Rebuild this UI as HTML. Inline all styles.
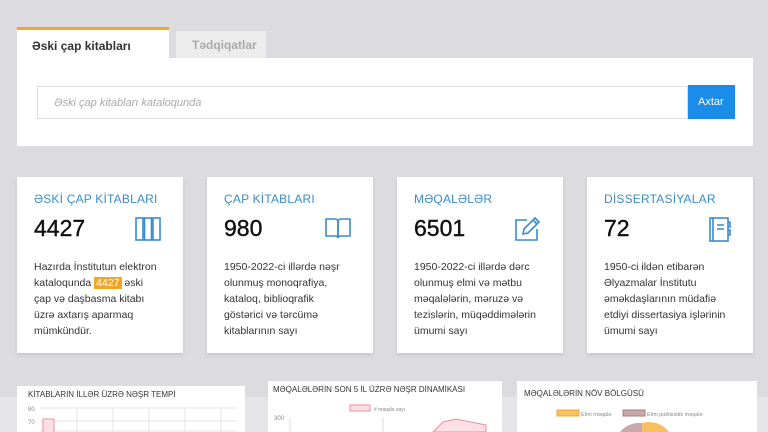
<!DOCTYPE html><html><head><meta charset="utf-8"><style>
*{box-sizing:border-box;margin:0;padding:0}
html,body{width:768px;height:432px;overflow:hidden}
body{background:#dcdce0;font-family:"Liberation Sans",sans-serif;position:relative}
.band{position:absolute;left:0;top:397px;width:768px;height:35px;background:#e6e6ea}
.abs{position:absolute}
.tab1{left:17px;top:27px;width:152px;height:32px;background:#fff;border-top:3px solid #f0a830;font-size:12px;font-weight:bold;color:#333;padding:9px 0 0 15px}
.tab2{left:176px;top:31px;width:90px;height:27px;background:#ececec;font-size:12px;font-weight:bold;color:#aaa;padding:7px 0 0 16px}
.panel{left:17px;top:58px;width:736px;height:88px;background:#fff}
.inp{left:37px;top:86px;width:651px;height:33px;border:1px solid #ddd;font-size:11px;font-style:italic;color:#aaa;padding:10px 0 0 16px}
.btn{left:688px;top:85px;width:47px;height:34px;background:#1a8cea;color:#fff;font-size:11px;padding:11px 0 0 10px}
.card{top:177px;width:166px;height:176px;background:#fff;box-shadow:0 2px 4px rgba(0,0,0,.1);padding:15px 0 0 17px}
.t{font-size:12px;color:#3a8ccc;letter-spacing:.2px}
.n{font-size:23px;color:#111;margin-top:9px;height:44px;-webkit-text-stroke:.4px #111}
.d{font-size:10.5px;color:#333;line-height:16px}
.ic{position:absolute;right:22px;top:40px}
.hl{background:#f5a623;color:#fff;padding:0 2px}
.ch{background:#fff;height:60px}
.ct{font-size:8px;color:#333;position:absolute}
</style></head><body>
<div class="band"></div>
<div class="abs tab1">Əski çap kitabları</div>
<div class="abs tab2">Tədqiqatlar</div>
<div class="abs panel"></div>
<div class="abs inp">Əski çap kitabları kataloqunda</div>
<div class="abs btn">Axtar</div>

<div class="abs card" style="left:17px"><div class="t">ƏSKİ ÇAP KİTABLARI</div><div class="n">4427</div>
<svg class="ic" width="26" height="24" viewBox="0 0 26 24" fill="none" stroke="#3a8ccc" stroke-width="1.6"><rect x="1" y="1" width="7" height="22"/><rect x="9.5" y="1" width="7" height="22"/><rect x="18" y="1" width="7" height="22"/></svg>
<div class="d">Hazırda İnstitutun elektron<br>kataloqunda <span class="hl">4427</span> əski<br>çap və daşbasma kitabı<br>üzrə axtarış aparmaq<br>mümkündür.</div></div>

<div class="abs card" style="left:207px"><div class="t">ÇAP KİTABLARI</div><div class="n">980</div>
<svg class="ic" width="26" height="22" viewBox="0 0 26 22" fill="none" stroke="#3a8ccc" stroke-width="1.6"><path d="M1 2h9c2 0 3 1 3 3v16c0-1.5-1-2-3-2H1z"/><path d="M25 2h-9c-2 0-3 1-3 3v16c0-1.5 1-2 3-2h9z"/></svg>
<div class="d">1950-2022-ci illərdə nəşr<br>olunmuş monoqrafiya,<br>kataloq, biblioqrafik<br>göstərici və tərcümə<br>kitablarının sayı</div></div>

<div class="abs card" style="left:397px"><div class="t">MƏQALƏLƏR</div><div class="n">6501</div>
<svg class="ic" width="26" height="24" viewBox="0 0 26 24" fill="none" stroke="#3a8ccc" stroke-width="1.6"><path d="M12 3H1v20h21V12"/><path d="M20 1l4 4-11 11-5 1 1-5z"/><path d="M18 3l4 4"/></svg>
<div class="d">1950-2022-ci illərdə dərc<br>olunmuş elmi və mətbu<br>məqalələrin, məruzə və<br>tezislərin, müqəddimələrin<br>ümumi sayı</div></div>

<div class="abs card" style="left:587px"><div class="t">DİSSERTASİYALAR</div><div class="n">72</div>
<svg class="ic" width="22" height="25" viewBox="0 0 22 25" fill="none" stroke="#3a8ccc" stroke-width="1.6"><rect x="1" y="1" width="18" height="23"/><path d="M4 1v23M8 8h7M8 12h7M19 5h2v5h-2M19 13h2v5h-2"/></svg>
<div class="d">1950-ci ildən etibarən<br>Əlyazmalar İnstitutu<br>əməkdaşlarının müdafiə<br>etdiyi dissertasiya işlərinin<br>ümumi sayı</div></div>

<div class="abs ch" style="left:17px;top:386px;width:228px"></div>
<div class="ct" style="left:28px;top:390px">KİTABLARIN İLLƏR ÜZRƏ NƏŞR TEMPİ</div>
<svg class="abs" style="left:25px;top:404px" width="215" height="28"><g font-size="6" fill="#888" font-family="Liberation Sans"><text x="3" y="7">80</text><text x="3" y="20">70</text></g><g stroke="#e4e4e4"><line x1="15" y1="4" x2="212" y2="4"/><line x1="15" y1="17" x2="212" y2="17"/><line x1="15" y1="27" x2="212" y2="27"/><line x1="52" y1="4" x2="52" y2="28"/><line x1="88" y1="4" x2="88" y2="28"/><line x1="124" y1="4" x2="124" y2="28"/><line x1="160" y1="4" x2="160" y2="28"/><line x1="196" y1="4" x2="196" y2="28"/></g><rect x="18" y="15" width="11" height="14" fill="#fde0e6" stroke="#f08ca0"/></svg>

<div class="abs ch" style="left:268px;top:381px;width:234px"></div>
<div class="ct" style="left:273px;top:385px">MƏQALƏLƏRİN SON 5 İL ÜZRƏ NƏŞR DİNAMİKASI</div>
<svg class="abs" style="left:268px;top:403px" width="234" height="29"><rect x="82" y="2" width="20" height="6" fill="#fde0e6" stroke="#f08ca0"/><text x="106" y="8" font-size="5" fill="#888" font-family="Liberation Sans"># məqalə sayı</text><text x="6" y="17" font-size="6" fill="#888" font-family="Liberation Sans">300</text><line x1="22" y1="15" x2="22" y2="29" stroke="#ddd"/><line x1="115" y1="15" x2="115" y2="29" stroke="#ddd"/><path d="M165 29l10-10 13-3 30 6V29z" fill="#fde0e6" stroke="#f08ca0"/></svg>

<div class="abs ch" style="left:517px;top:381px;width:240px"></div>
<div class="ct" style="left:524px;top:389px">MƏQALƏLƏRİN NÖV BÖLGÜSÜ</div>
<svg class="abs" style="left:517px;top:403px" width="240" height="29"><rect x="40" y="7" width="22" height="6" fill="#f8c060" stroke="#f0a830"/><text x="64" y="13" font-size="5.5" fill="#888" font-family="Liberation Sans">Elmi məqalə</text><rect x="106" y="7" width="22" height="6" fill="#c8a8a8" stroke="#a08080"/><text x="130" y="13" font-size="5.5" fill="#888" font-family="Liberation Sans">Elmi publisistik məqalə</text><path d="M125 20a25 25 0 0 1 27 9h-27z" fill="#f8c060"/><path d="M125 20a25 25 0 0 0-22 9h22z" fill="#c8a8a8"/></svg>
</body></html>
